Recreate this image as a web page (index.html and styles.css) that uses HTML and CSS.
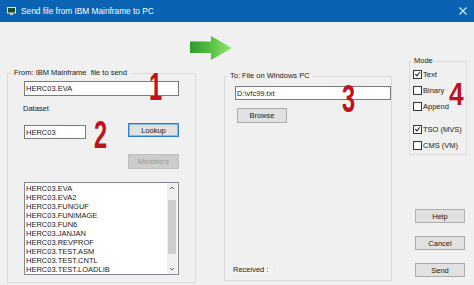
FILE: index.html
```html
<!DOCTYPE html>
<html lang="en">

<head>
    <meta charset="UTF-8">
    <meta name="viewport" content="width=device-width, initial-scale=1.0">
    <title>Send file from IBM Mainframe to PC</title>
    <link rel="stylesheet" href="styles.css">
</head>

<body>
    <div class="window">
        <div class="titlebar">
            <svg class="app-icon" width="9" height="8" viewBox="0 0 9 8">
                <rect x="0.5" y="0.5" width="8" height="5.5" fill="#1d4d2c" stroke="#d8e4dc" />
                <rect x="3" y="6.5" width="3" height="1.5" fill="#d8e4dc" />
            </svg>
            <span class="title">Send file from IBM Mainframe to PC</span>
            <svg class="close" width="8" height="8" viewBox="0 0 8 8">
                <path d="M0.5 0.5 L7.5 7.5 M7.5 0.5 L0.5 7.5" stroke="#d9ecff" stroke-width="1.1" />
            </svg>
        </div>

        <div class="client">
            <div class="arrow-row">
                <svg class="arrow" width="42" height="24" viewBox="0 0 42 24">
                    <defs>
                        <linearGradient id="arrowFill" x1="0" y1="0" x2="1" y2="0">
                            <stop offset="0" stop-color="#2f9a2c" />
                            <stop offset="0.55" stop-color="#5cc447" />
                            <stop offset="1" stop-color="#9be772" />
                        </linearGradient>
                    </defs>
                    <path d="M0 5.5 H21 V0 L42 12 L21 24 V17 H0 Z" fill="url(#arrowFill)" />
                </svg>
            </div>

            <div class="columns">
                <fieldset class="group group-from">
                    <legend>From: IBM Mainframe&nbsp; file to send</legend>
                    <div class="group-body">
                        <input class="field field-wide" type="text" value="HERC03.EVA">
                        <div class="label">Dataset</div>
                        <div class="row">
                            <input class="field field-short" type="text" value="HERC03">
                            <button class="btn btn-default">Lookup</button>
                        </div>
                        <button class="btn btn-disabled" disabled>Members</button>
                        <div class="listbox">
                            <ul class="items">
                                <li>HERC03.EVA</li>
                                <li>HERC03.EVA2</li>
                                <li>HERC03.FUNGUF</li>
                                <li>HERC03.FUNIMAGE</li>
                                <li>HERC03.FUN6</li>
                                <li>HERC03.JANJAN</li>
                                <li>HERC03.REVPROF</li>
                                <li>HERC03.TEST.ASM</li>
                                <li>HERC03.TEST.CNTL</li>
                                <li>HERC03.TEST.LOADLIB</li>
                            </ul>
                            <div class="scrollbar">
                                <svg class="scroll-arrow" width="10" height="10" viewBox="0 0 10 10">
                                    <path d="M3 6 L5 4 L7 6" fill="none" stroke="#606060" stroke-width="1" />
                                </svg>
                                <div class="scroll-track">
                                    <div class="scroll-thumb"></div>
                                </div>
                                <svg class="scroll-arrow" width="10" height="10" viewBox="0 0 10 10">
                                    <path d="M3 4 L5 6 L7 4" fill="none" stroke="#606060" stroke-width="1" />
                                </svg>
                            </div>
                        </div>
                    </div>
                </fieldset>

                <fieldset class="group group-to">
                    <legend>To: File on Windows PC</legend>
                    <div class="group-body">
                        <input class="field field-path" type="text" value="D:\vfc99.txt">
                        <button class="btn btn-browse">Browse</button>
                        <div class="label received">Received :</div>
                    </div>
                </fieldset>

                <div class="side">
                    <fieldset class="group group-mode">
                        <legend>Mode</legend>
                        <div class="group-body">
                            <label class="check"><span class="box checked"></span>Text</label>
                            <label class="check"><span class="box"></span>Binary</label>
                            <label class="check"><span class="box"></span>Append</label>
                            <label class="check spaced"><span class="box checked"></span>TSO (MVS)</label>
                            <label class="check"><span class="box"></span>CMS (VM)</label>
                        </div>
                    </fieldset>
                    <div class="actions">
                        <button class="btn">Help</button>
                        <button class="btn">Cancel</button>
                        <button class="btn">Send</button>
                    </div>
                </div>
            </div>

            <!-- annotation numbers painted over the dialog -->
            <span class="marker marker-1">1</span>
            <span class="marker marker-2">2</span>
            <span class="marker marker-3">3</span>
            <span class="marker marker-4">4</span>
        </div>
    </div>
</body>

</html>
```

FILE: styles.css
```css
body {
    margin: 0px;
    background: #f0f0f0;
}

.window {
    width: 474px;
    height: 285px;
    overflow: hidden;
    background: #f0f0f0;
    font-family: 'Liberation Sans', Arial, sans-serif;
    font-size: 7.5px;
    color: #1a1a1a;
}

.titlebar {
    height: 22px;
    background: #0a62b2;
    display: flex;
    align-items: center;
    padding-left: 7px;
    padding-right: 7px;
}

.app-icon {
    margin-right: 5px;
}

.title {
    color: white;
    font-size: 8.3px;
    flex: 1;
}

.client {
    position: relative;
    height: 263px;
}

.arrow-row {
    box-sizing: border-box;
    height: 34px;
    padding-top: 14px;
    padding-left: 190px;
}

.arrow {
    display: block;
}

.columns {
    display: flex;
    align-items: flex-start;
    padding-left: 7px;
    height: 229px;
}

/* group boxes */

.group {
    margin: 0px;
    padding: 0px;
    border: 1px solid #dcdcdc;
    display: flex;
    flex-direction: column;
    box-sizing: border-box;
}

.group legend {
    padding: 0px 2px;
    line-height: 10px;
    font-size: 7.5px;
}

.group-body {
    display: flex;
    flex-direction: column;
    flex: 1;
}

.group-from {
    margin-top: 12px;
    width: 189px;
    height: 215px;
}

.group-from legend {
    margin-left: 4px;
}

.group-from .group-body {
    padding: 0px 16px;
}

.group-to {
    margin-top: 15px;
    margin-left: 28px;
    width: 166px;
    height: 210px;
}

.group-to legend {
    margin-left: 3px;
}

.group-to .group-body {
    padding: 0px 0px 5px 10px;
}

.side {
    margin-left: 17px;
    width: 58px;
    height: 229px;
    display: flex;
    flex-direction: column;
    box-sizing: border-box;
    padding-bottom: 8px;
}

.group-mode {
    height: 99px;
}

.group-mode legend {
    margin-left: 2px;
}

.group-mode .group-body {
    padding-left: 3px;
}

/* controls */

.field {
    box-sizing: border-box;
    border: 1px solid #7a7a7a;
    background: white;
    font-family: 'Liberation Sans', Arial, sans-serif;
    font-size: 7.5px;
    color: #1a1a1a;
    padding: 0px 1px;
    margin: 0px;
    outline: none;
}

.field-wide {
    margin-top: 3px;
    width: 100%;
    height: 15px;
}

.label {
    line-height: 10px;
}

.group-from .label {
    margin-top: 8px;
    margin-left: -1px;
}

.row {
    display: flex;
    align-items: flex-start;
    margin-top: 9px;
}

.field-short {
    margin-top: 2px;
    width: 62px;
    height: 14px;
}

.btn {
    box-sizing: border-box;
    width: 50px;
    height: 15px;
    padding: 0px;
    margin: 0px;
    border: 1px solid #adadad;
    background: #e1e1e1;
    font-family: 'Liberation Sans', Arial, sans-serif;
    font-size: 7.5px;
    color: #1a1a1a;
}

.btn-default {
    margin-left: auto;
    width: 51px;
    height: 14px;
    border-color: #2a7fd4;
    box-shadow: inset 0px 0px 0px 1px #8dbbe8;
}

.btn-disabled {
    align-self: flex-end;
    margin-top: 15px;
    width: 51px;
    background: #cccccc;
    border-color: #bfbfbf;
    color: #9a9a9a;
}

.listbox {
    margin-top: 13px;
    height: 93px;
    box-sizing: border-box;
    border: 1px solid #828790;
    background: white;
    display: flex;
}

.items {
    list-style: none;
    margin: 0px;
    padding: 1px 0px 0px 1px;
    flex: 1;
}

.items li {
    line-height: 9px;
    height: 9px;
    white-space: nowrap;
}

.scrollbar {
    width: 10px;
    margin-right: 1px;
    display: flex;
    flex-direction: column;
    background: #f0f0f0;
}

.scroll-arrow {
    display: block;
    flex: none;
}

.scroll-track {
    flex: 1;
    padding: 7px 1px 10px 1px;
    display: flex;
}

.scroll-thumb {
    flex: 1;
    background: #cdcdcd;
}

.field-path {
    margin-top: 5px;
    width: 156px;
    height: 14px;
}

.btn-browse {
    align-self: flex-start;
    margin-top: 8px;
    margin-left: 2px;
}

.received {
    margin-top: auto;
    margin-left: -2px;
    width: 40px;
    background: #f4f4f4;
}

/* mode checkboxes */

.check {
    display: flex;
    align-items: center;
    height: 11px;
    margin-top: 5px;
    white-space: nowrap;
}

.check:first-child {
    margin-top: 3px;
}

.check.spaced {
    margin-top: 12px;
}

.box {
    width: 9px;
    height: 9px;
    box-sizing: border-box;
    border: 1px solid #333333;
    background: white;
    margin-right: 1px;
    position: relative;
}

.box.checked::after {
    content: '';
    position: absolute;
    left: 2px;
    top: 0px;
    width: 2px;
    height: 4px;
    border-right: 1px solid #222222;
    border-bottom: 1px solid #222222;
    transform: rotate(40deg);
}

.actions {
    margin-top: auto;
    display: flex;
    flex-direction: column;
    gap: 13px;
    padding-left: 6px;
}

.actions .btn {
    height: 14px;
}

/* red annotation numbers */

.marker {
    position: absolute;
    font-family: 'Liberation Sans', Arial, sans-serif;
    font-weight: bold;
    font-size: 38px;
    line-height: 1;
    color: #c0121c;
    transform: scaleX(0.62);
    transform-origin: left top;
}

.marker-1 {
    left: 149px;
    top: 46px;
}

.marker-2 {
    left: 94px;
    top: 94px;
}

.marker-3 {
    left: 342px;
    top: 58px;
}

.marker-4 {
    left: 449px;
    top: 57px;
    font-size: 31px;
    transform: scaleX(0.85);
}
```
